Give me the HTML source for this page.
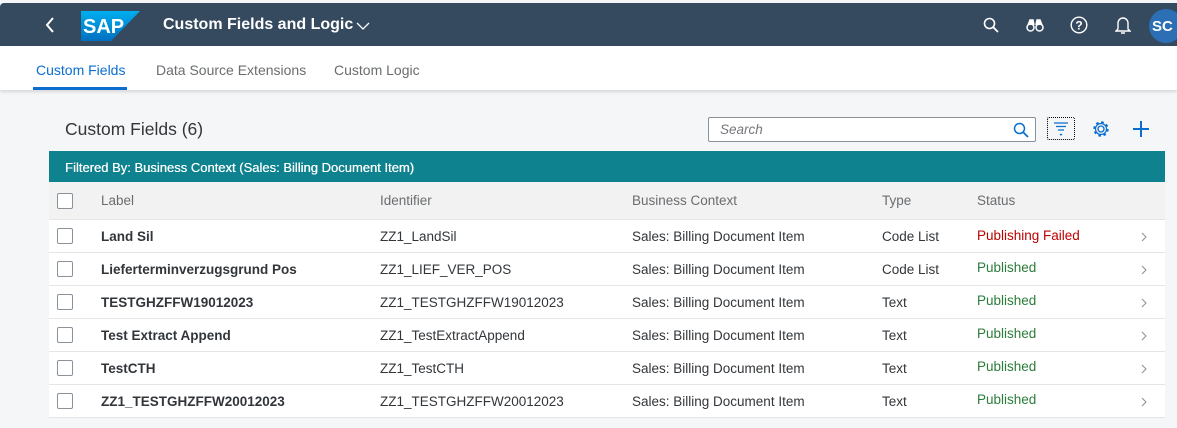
<!DOCTYPE html>
<html><head><meta charset="utf-8"><style>
*{margin:0;padding:0;box-sizing:border-box}
body{width:1177px;height:428px;overflow:hidden;background:#f5f6f7;font-family:"Liberation Sans",sans-serif;position:relative;color:#32363a}
.shell{position:absolute;left:0;top:3px;width:1177px;height:43px;background:#354a5f;border-radius:4px 0 0 0}
.tabs{position:absolute;left:0;top:46px;width:1177px;height:44px;background:#fff;box-shadow:0 2px 3px rgba(0,0,0,.12)}
.tab{position:absolute;top:16px;font-size:14px;color:#6a6d70}
.abs{position:absolute}
.tbl{position:absolute;left:49px;top:151px;width:1116px}
.filter{height:31px;background:#0f828f;color:#fff;font-size:13px;padding:9px 0 0 16px;text-shadow:0.3px 0 0 #fff}
.hdr{height:38px;background:#f2f2f2;position:relative;border-bottom:1px solid #e5e5e5;font-size:13.5px;color:#6a6d70}
.row{height:33px;background:#fff;position:relative;border-bottom:1px solid #e5e5e5;font-size:13.5px}
.cb{position:absolute;left:8px;width:16px;height:16px;border:1px solid #89919a;border-radius:2px;background:#fff}
.hdr .cb{top:11px}.row .cb{top:8px}
.c{position:absolute;top:9px;white-space:nowrap}
.hdr .c{top:11px}
.b{font-weight:bold;color:#32363a}
.g{color:#2b7c3a}.r{color:#bb0000}
.ch{position:absolute;left:1091px;top:11px}
</style></head><body>
<div class="shell">
<svg class="abs" style="left:44px;top:13px" width="12" height="18"><path d="M9 2 L3 9 L9 16" stroke="#fff" stroke-width="2" fill="none"/></svg>
<svg class="abs" style="left:81px;top:8px" width="59" height="30"><defs><linearGradient id="g" x1="0" y1="0" x2="0" y2="1"><stop offset="0" stop-color="#00aeef"/><stop offset="1" stop-color="#0070c0"/></linearGradient></defs><path d="M0 0 H59 L30 30 H0Z" fill="url(#g)"/><text x="2" y="22" font-family="Liberation Sans" font-weight="bold" font-size="20" fill="#fff">SAP</text></svg>
<div class="abs" style="left:163px;top:13px;color:#fff;font-weight:bold;font-size:16px">Custom Fields and Logic</div>
<svg class="abs" style="left:356px;top:18px" width="14" height="10"><path d="M1 2 L7 8 L13 2" stroke="#fff" stroke-width="1.3" fill="none"/></svg>
<svg class="abs" style="left:983px;top:14px" width="16" height="16"><circle cx="6.5" cy="6.5" r="5" stroke="#fff" stroke-width="1.6" fill="none"/><path d="M10 10 L15 15" stroke="#fff" stroke-width="1.8"/></svg>
<svg class="abs" style="left:1026px;top:14px" width="18" height="16"><circle cx="4.5" cy="10.5" r="3.5" stroke="#fff" stroke-width="1.5" fill="none"/><circle cx="13.5" cy="10.5" r="3.5" stroke="#fff" stroke-width="1.5" fill="none"/><path d="M2 8 L4 3 H7 L8 8 M16 8 L14 3 H11 L10 8" stroke="#fff" stroke-width="1.5" fill="#fff"/></svg>
<svg class="abs" style="left:1070px;top:13px" width="18" height="18"><circle cx="9" cy="9" r="7.8" stroke="#fff" stroke-width="1.4" fill="none"/><text x="9" y="13.5" text-anchor="middle" font-family="Liberation Sans" font-size="12" font-weight="bold" fill="#fff">?</text></svg>
<svg class="abs" style="left:1115px;top:12px" width="16" height="20"><path d="M3 14 V8 A5 5 0 0 1 13 8 V14 L15 16 H1 Z" stroke="#fff" stroke-width="1.4" fill="none"/><path d="M6 18 H10" stroke="#fff" stroke-width="1.5"/></svg>
<div class="abs" style="left:1149px;top:6px;width:34px;height:34px;border-radius:50%;background:#2c6fb5;color:#fff;font-weight:bold;font-size:15px;padding:9px 0 0 3px">SC</div>
</div>
<div class="tabs">
<div class="tab" style="left:36px;color:#0a6ed1">Custom Fields</div>
<div class="abs" style="left:33px;top:41px;width:94px;height:3px;background:#0a6ed1"></div>
<div class="tab" style="left:156px">Data Source Extensions</div>
<div class="tab" style="left:334px">Custom Logic</div>
</div>
<div class="abs" style="left:65px;top:119px;font-size:17.5px">Custom Fields (6)</div>
<div class="abs" style="left:708px;top:117px;width:328px;height:25px;border:1px solid #89919a;border-radius:2px;background:#fff">
<span class="abs" style="left:11px;top:4px;font-style:italic;color:#74777a;font-size:13.5px">Search</span>
<svg class="abs" style="left:304px;top:4px" width="16" height="16"><circle cx="6.5" cy="6.5" r="5" stroke="#0a6ed1" stroke-width="1.5" fill="none"/><path d="M10 10 L15 15" stroke="#0a6ed1" stroke-width="1.8"/></svg>
</div>
<div class="abs" style="left:1047px;top:117px;width:28px;height:23px;border:1px dotted #000;border-radius:2px"></div>
<svg class="abs" style="left:1052px;top:120px" width="18" height="18"><path d="M2 3 H16 M4 6.5 H14 M6 10 H12 M8 14 L9 15 L10 14" stroke="#0a6ed1" stroke-width="1.2" fill="none"/></svg>
<svg class="abs" style="left:1092px;top:120px" width="18" height="18"><circle cx="9" cy="9" r="3" stroke="#0a6ed1" stroke-width="1.3" fill="none"/><circle cx="9" cy="9" r="6.5" stroke="#0a6ed1" stroke-width="2.4" fill="none" stroke-dasharray="2.5 2.6"/><circle cx="9" cy="9" r="5.5" stroke="#0a6ed1" stroke-width="1.2" fill="none"/></svg>
<svg class="abs" style="left:1132px;top:120px" width="18" height="18"><path d="M9 1 V17 M1 9 H17" stroke="#0a6ed1" stroke-width="2"/></svg>
<div class="tbl">
<div class="filter">Filtered By: Business Context (Sales: Billing Document Item)</div>
<div class="hdr"><div class="cb"></div><div class="c" style="left:52px">Label</div><div class="c" style="left:331px">Identifier</div><div class="c" style="left:583px">Business Context</div><div class="c" style="left:833px">Type</div><div class="c" style="left:928px">Status</div></div>
<div class="row"><div class="cb"></div><div class="c b" style="left:52px">Land Sil</div><div class="c" style="left:331px">ZZ1_LandSil</div><div class="c" style="left:583px">Sales: Billing Document Item</div><div class="c" style="left:833px">Code List</div><div class="c r" style="left:928px;top:8px">Publishing Failed</div><svg class="ch" width="8" height="12"><path d="M2 2 L6 6 L2 10" stroke="#89919a" stroke-width="1" fill="none"/></svg></div>
<div class="row"><div class="cb"></div><div class="c b" style="left:52px">Lieferterminverzugsgrund Pos</div><div class="c" style="left:331px">ZZ1_LIEF_VER_POS</div><div class="c" style="left:583px">Sales: Billing Document Item</div><div class="c" style="left:833px">Code List</div><div class="c g" style="left:928px;top:7px">Published</div><svg class="ch" width="8" height="12"><path d="M2 2 L6 6 L2 10" stroke="#89919a" stroke-width="1" fill="none"/></svg></div>
<div class="row"><div class="cb"></div><div class="c b" style="left:52px">TESTGHZFFW19012023</div><div class="c" style="left:331px">ZZ1_TESTGHZFFW19012023</div><div class="c" style="left:583px">Sales: Billing Document Item</div><div class="c" style="left:833px">Text</div><div class="c g" style="left:928px;top:7px">Published</div><svg class="ch" width="8" height="12"><path d="M2 2 L6 6 L2 10" stroke="#89919a" stroke-width="1" fill="none"/></svg></div>
<div class="row"><div class="cb"></div><div class="c b" style="left:52px">Test Extract Append</div><div class="c" style="left:331px">ZZ1_TestExtractAppend</div><div class="c" style="left:583px">Sales: Billing Document Item</div><div class="c" style="left:833px">Text</div><div class="c g" style="left:928px;top:7px">Published</div><svg class="ch" width="8" height="12"><path d="M2 2 L6 6 L2 10" stroke="#89919a" stroke-width="1" fill="none"/></svg></div>
<div class="row"><div class="cb"></div><div class="c b" style="left:52px">TestCTH</div><div class="c" style="left:331px">ZZ1_TestCTH</div><div class="c" style="left:583px">Sales: Billing Document Item</div><div class="c" style="left:833px">Text</div><div class="c g" style="left:928px;top:7px">Published</div><svg class="ch" width="8" height="12"><path d="M2 2 L6 6 L2 10" stroke="#89919a" stroke-width="1" fill="none"/></svg></div>
<div class="row"><div class="cb"></div><div class="c b" style="left:52px">ZZ1_TESTGHZFFW20012023</div><div class="c" style="left:331px">ZZ1_TESTGHZFFW20012023</div><div class="c" style="left:583px">Sales: Billing Document Item</div><div class="c" style="left:833px">Text</div><div class="c g" style="left:928px;top:7px">Published</div><svg class="ch" width="8" height="12"><path d="M2 2 L6 6 L2 10" stroke="#89919a" stroke-width="1" fill="none"/></svg></div>
</div>
</body></html>
